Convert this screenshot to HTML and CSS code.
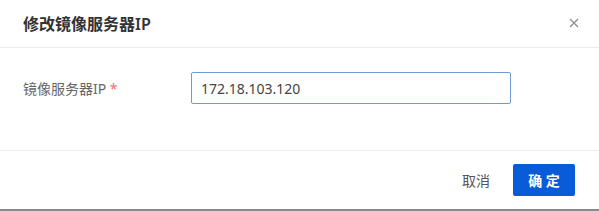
FILE: index.html
```html
<!DOCTYPE html>
<html lang="zh-CN">

<head>
    <meta charset="UTF-8">
    <meta name="viewport" content="width=device-width, initial-scale=1.0">
    <title>修改镜像服务器IP</title>
    <link rel="stylesheet" href="styles.css">
</head>

<body>

    <!-- **** Dialog **** -->
    <div class="dialog">
        <div class="dialog-header">
            <h3>修改镜像服务器IP</h3>
            <span class="close">
                <svg width="10" height="10" viewBox="0 0 10 10">
                    <path d="M1 1L9 9M9 1L1 9" stroke="#8c8c8c" stroke-width="1.2" fill="none" />
                </svg>
            </span>
        </div>

        <div class="dialog-body">
            <div class="form-row">
                <label class="form-label">镜像服务器IP <em>*</em></label>
                <input type="text" class="form-input" value="172.18.103.120">
            </div>
        </div>

        <div class="dialog-footer">
            <button class="btn btn-text">取消</button>
            <button class="btn btn-primary">确 定</button>
        </div>
    </div>

</body>

</html>
```

FILE: styles.css
```css
/* Reset CSS */
* {
    margin: 0;
    padding: 0;
    box-sizing: border-box;
}

body {
    font-family: "Noto Sans", "Noto Sans CJK SC", sans-serif;
    background: #fff;
    color: #333;
}

.dialog {
    width: 599px;
    height: 211px;
    background: #fff;
    border-bottom: 2px solid #8a8a8a;
}

.dialog-header {
    height: 48px;
    display: flex;
    align-items: center;
    justify-content: space-between;
    padding: 0 19px 0 23px;
    border-bottom: 1px solid #ebebeb;
}

.dialog-header h3 {
    font-size: 16px;
    font-weight: 600;
    color: #333;
    margin-top: -2px;
}

.close {
    display: flex;
    width: 12px;
    height: 12px;
    align-items: center;
    justify-content: center;
    margin-top: -2px;
}

.dialog-body {
    height: 102px;
    padding: 24px 23px 0;
}

.form-row {
    display: flex;
    align-items: center;
}

.form-label {
    width: 168px;
    font-size: 14px;
    color: #666;
}

.form-label em {
    font-style: normal;
    color: #f56c6c;
}

.form-input {
    width: 320px;
    height: 32px;
    border: 1px solid #6b9bd8;
    border-radius: 2px;
    outline: none;
    padding: 0 9px;
    font-family: inherit;
    font-size: 14px;
    color: #444;
}

.dialog-footer {
    display: flex;
    justify-content: flex-end;
    align-items: flex-start;
    gap: 8px;
    padding: 13px 24px 0;
    border-top: 1px solid #ebebeb;
}

.btn {
    height: 32px;
    border: none;
    outline: none;
    font-family: inherit;
    font-size: 14px;
    cursor: pointer;
    border-radius: 2px;
}

.btn-text {
    background: transparent;
    color: #555;
    padding: 0 15px;
}

.btn-primary {
    width: 62px;
    background: #0a5bd7;
    color: #fff;
    font-weight: 600;
}
```
